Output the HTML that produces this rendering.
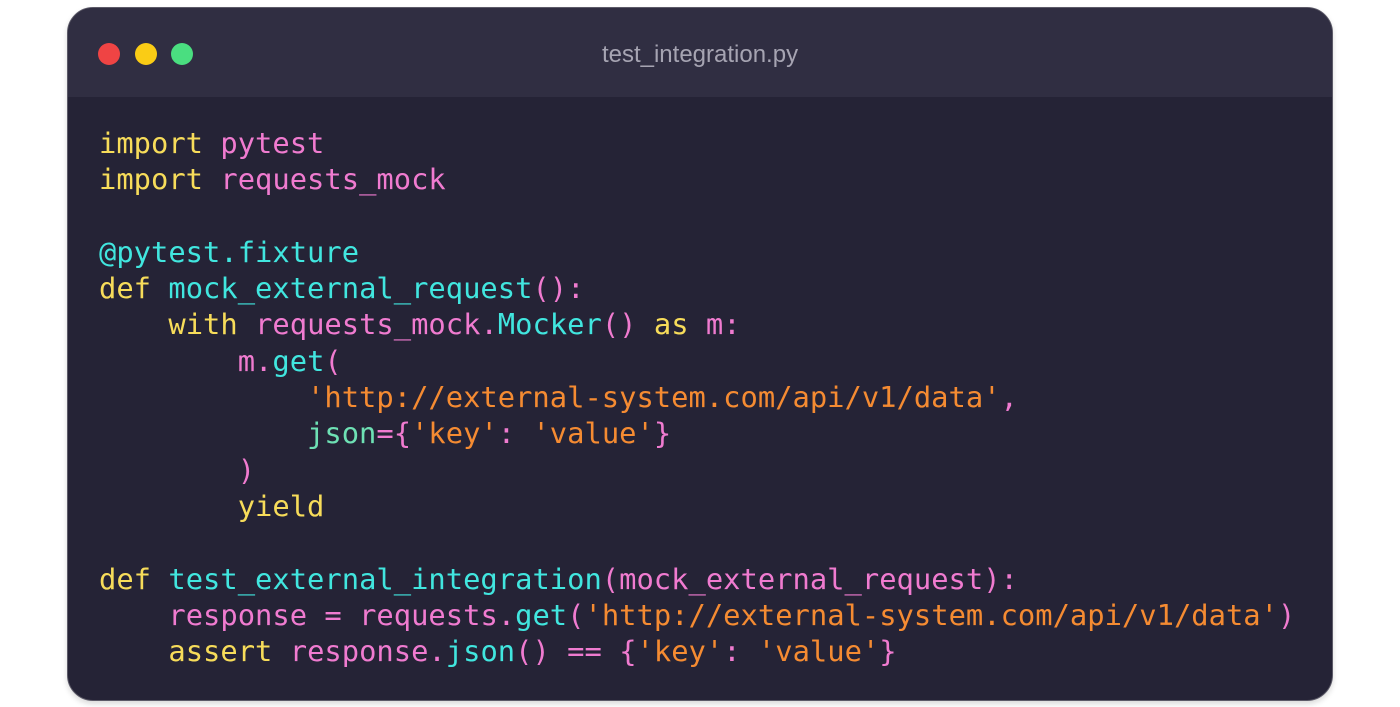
<!DOCTYPE html>
<html><head><style>
html,body{margin:0;padding:0;background:#fff;width:1400px;height:707px;overflow:hidden}
.win{position:absolute;left:67px;top:7px;width:1264px;height:692px;border:1.5px solid #5c5a68;border-radius:26px;background:#252336;overflow:hidden;box-shadow:0 3px 6px rgba(0,0,0,.15)}
.bar{height:89px;background:#302e42;position:relative}
.dot{position:absolute;top:35px;width:22px;height:22px;border-radius:50%}
.title{position:absolute;left:0;right:0;top:33px;text-align:center;font:24px "Liberation Sans",sans-serif;color:#a6a4b2}
pre{margin:0;position:absolute;left:31px;top:117px;font:28.8px/36.3px "DejaVu Sans Mono","Liberation Mono",monospace;color:#f07bd0;letter-spacing:0}
.k{color:#f7dc5a}.p{color:#f07bd0}.c{color:#41e6df}.o{color:#f58b32}.g{color:#6ee0b4}
</style></head><body>
<div class="win">
<div class="bar">
<div class="dot" style="left:30px;background:#ef4444"></div>
<div class="dot" style="left:67px;background:#facc15"></div>
<div class="dot" style="left:103px;background:#4ade80"></div>
<div class="title">test_integration.py</div>
</div>
<pre><span class="k">import</span> <span class="p">pytest</span>
<span class="k">import</span> <span class="p">requests_mock</span>

<span class="c">@pytest.fixture</span>
<span class="k">def</span> <span class="c">mock_external_request</span><span class="p">():</span>
    <span class="k">with</span> <span class="p">requests_mock.</span><span class="c">Mocker</span><span class="p">()</span> <span class="k">as</span> <span class="p">m:</span>
        <span class="p">m.</span><span class="c">get</span><span class="p">(</span>
            <span class="o">'http://external-system.com/api/v1/data'</span><span class="p">,</span>
            <span class="g">json</span><span class="p">={</span><span class="o">'key'</span><span class="p">:</span> <span class="o">'value'</span><span class="p">}</span>
        <span class="p">)</span>
        <span class="k">yield</span>

<span class="k">def</span> <span class="c">test_external_integration</span><span class="p">(mock_external_request):</span>
    <span class="p">response =</span> <span class="p">requests.</span><span class="c">get</span><span class="p">(</span><span class="o">'http://external-system.com/api/v1/data'</span><span class="p">)</span>
    <span class="k">assert</span> <span class="p">response.</span><span class="c">json</span><span class="p">()</span> <span class="p">==</span> <span class="p">{</span><span class="o">'key'</span><span class="p">:</span> <span class="o">'value'</span><span class="p">}</span></pre>
</div>
</body></html>
